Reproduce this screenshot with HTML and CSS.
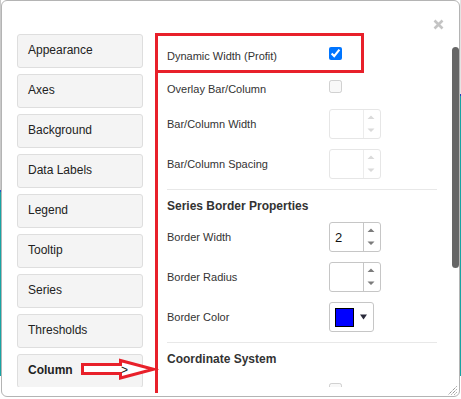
FILE: index.html
```html
<!DOCTYPE html>
<html>
<head>
<meta charset="utf-8">
<link rel="stylesheet" href="styles.css">
</head>
<body>
<div class="modal">
  <span class="close" aria-label="Close"><svg width="11" height="11" viewBox="0 0 11 11"><path d="M1.5 1.5 L9.5 9.5 M9.5 1.5 L1.5 9.5" stroke="#c4c4c4" stroke-width="2.6" stroke-linecap="butt"/></svg></span>
  <div class="body">
    <nav class="side">
      <div class="tab">Appearance</div>
      <div class="tab">Axes</div>
      <div class="tab">Background</div>
      <div class="tab">Data Labels</div>
      <div class="tab">Legend</div>
      <div class="tab">Tooltip</div>
      <div class="tab">Series</div>
      <div class="tab">Thresholds</div>
      <div class="tab active">Column <span class="caret">&gt;</span></div>
    </nav>
    <div class="panel">
      <div class="row check first"><label class="lbl">Dynamic Width (Profit)</label><input type="checkbox" checked></div>
      <div class="row check second"><label class="lbl">Overlay Bar/Column</label><input type="checkbox" disabled></div>
      <div class="row"><label class="lbl">Bar/Column Width</label>
        <div class="spin off"><input type="text" value="" disabled><span class="arrows"><svg width="16" height="28" viewBox="0 0 16 28"><path d="M3.5 9 L7 5.5 L10.5 9Z M3.5 18.5 L7 22 L10.5 18.5Z"/></svg></span></div>
      </div>
      <div class="row"><label class="lbl">Bar/Column Spacing</label>
        <div class="spin off"><input type="text" value="" disabled><span class="arrows"><svg width="16" height="28" viewBox="0 0 16 28"><path d="M3.5 9 L7 5.5 L10.5 9Z M3.5 18.5 L7 22 L10.5 18.5Z"/></svg></span></div>
      </div>
      <hr class="sep">
      <h3 class="heading">Series Border Properties</h3>
      <div class="row"><label class="lbl">Border Width</label>
        <div class="spin"><input type="text" value="2"><span class="arrows"><svg width="16" height="28" viewBox="0 0 16 28"><path d="M3.5 9 L7 5.5 L10.5 9Z M3.5 18.5 L7 22 L10.5 18.5Z"/></svg></span></div>
      </div>
      <div class="row"><label class="lbl">Border Radius</label>
        <div class="spin"><input type="text" value=""><span class="arrows"><svg width="16" height="28" viewBox="0 0 16 28"><path d="M3.5 9 L7 5.5 L10.5 9Z M3.5 18.5 L7 22 L10.5 18.5Z"/></svg></span></div>
      </div>
      <div class="row"><label class="lbl">Border Color</label>
        <div class="picker"><span class="swatch"></span><svg class="drop" width="7" height="6" viewBox="0 0 7 6"><path d="M0 0.5 H7 L3.5 5.5Z"/></svg></div>
      </div>
      <hr class="sep">
      <h3 class="heading">Coordinate System</h3>
      <div class="row check last"><label class="lbl">Enable Polar Mode</label><input type="checkbox" disabled></div>
    </div>
  </div>
  <div class="thumb"></div>
  <span class="grip"><svg width="9" height="9" viewBox="0 0 9 9"><path d="M8.5 0.5 L0.5 8.5 M8.5 3.5 L3.5 8.5 M8.5 6.5 L6.5 8.5" stroke="#666" stroke-width="1" stroke-dasharray="1 1"/></svg></span>
</div>
<svg class="annot" width="461" height="399" viewBox="0 0 461 399">
  <rect x="156.5" y="34.5" width="206" height="37" fill="none" stroke="#e8202a" stroke-width="3"/>
  <path d="M156.5 71 V393" fill="none" stroke="#e8202a" stroke-width="3"/>
  <polygon points="82.5,364.5 120.5,364.5 120.5,360.5 153.5,369.3 120.5,378 120.5,373.5 82.5,373.5" fill="#fff" stroke="#e8202a" stroke-width="3"/>
</svg>
</body>
</html>
```

FILE: styles.css
```css
html, body {
  margin: 0;
  padding: 0;
}

body {
  position: relative;
  width: 461px;
  height: 399px;
  overflow: hidden;
  font-family: "Liberation Sans", Arial, sans-serif;
  background:
    linear-gradient(to bottom, #c9c9c9 0 190px, #2456c4 190px 192px, #17a3a3 192px 376px, #ffffff 376px) left top / 1px 100% no-repeat,
    linear-gradient(to bottom, #e4e4e4 0 94px, #2040c0 94px 96px, #17a3a3 96px 376px, #ffffff 376px) right top / 1px 100% no-repeat,
    #ffffff;
}

.modal {
  position: relative;
  box-sizing: border-box;
  width: 459px;
  height: 397px;
  margin-left: 1px;
  border: 1px solid #b4b4b4;
  border-radius: 6px;
  background: #ffffff;
}

.close {
  position: absolute;
  top: 18px;
  right: 15px;
  width: 11px;
  height: 11px;
  display: block;
}

.close svg {
  display: block;
}

.body {
  display: flex;
  gap: 24px;
  margin-top: 33px;
  height: 353px;
  padding-left: 15px;
  overflow: hidden;
}

.side {
  flex: none;
  width: 126px;
  display: flex;
  flex-direction: column;
  gap: 6px;
}

.tab {
  flex: none;
  box-sizing: border-box;
  height: 34px;
  padding: 8px 14px 0 10px;
  border: 1px solid #dedede;
  border-radius: 3px;
  background: #f4f4f4;
  font-size: 12px;
  line-height: 14px;
  color: #222;
  display: flex;
  justify-content: space-between;
}

.tab.active {
  font-weight: bold;
}

.caret {
  position: relative;
  z-index: 5;
  font-weight: normal;
  color: #111;
}

.panel {
  flex: none;
  width: 270px;
  padding-top: 3px;
}

.row {
  display: flex;
  align-items: center;
  height: 40px;
  font-size: 11px;
  color: #333;
}

.lbl {
  flex: none;
  width: 162px;
  line-height: 13px;
}

.row.check {
  align-items: baseline;
  box-sizing: border-box;
  padding-top: 10px;
}

.row.first {
  height: 33px;
}

.row.second {
  height: 34px;
}

.row.last {
  height: 40px;
  padding-top: 13px;
}

.row input[type="checkbox"] {
  margin: 0;
  width: 13px;
  height: 13px;
}

.spin {
  display: flex;
  box-sizing: border-box;
  width: 52px;
  height: 30px;
  border: 1px solid #c6c6c6;
  border-radius: 3px;
  background: #fff;
}

.spin input {
  box-sizing: border-box;
  width: 34px;
  height: 100%;
  margin: 0;
  padding: 0 0 0 5px;
  border: 0;
  border-right: 1px solid #c6c6c6;
  background: transparent;
  font-family: "Liberation Sans", Arial, sans-serif;
  font-size: 13px;
  color: #111;
  outline: none;
}

.arrows {
  display: block;
  width: 16px;
  height: 28px;
}

.arrows svg {
  display: block;
  fill: #7c7c7c;
}

.spin.off {
  border-color: #e6e6e6;
}

.spin.off input {
  border-right-color: #ececec;
}

.spin.off .arrows svg {
  fill: #dadada;
}

.picker {
  display: flex;
  align-items: center;
  gap: 6px;
  box-sizing: border-box;
  width: 45px;
  height: 30px;
  padding-left: 5px;
  border: 1px solid #c6c6c6;
  border-radius: 3px;
}

.swatch {
  display: block;
  box-sizing: border-box;
  width: 19px;
  height: 19px;
  border: 1px solid #000;
  background: #0000ff;
}

.drop {
  display: block;
  fill: #2a2a3a;
}

.sep {
  margin: 5px 0 0;
  height: 0;
  border: 0;
  border-top: 1px solid #e8e8e8;
}

.heading {
  margin: 9px 0 4px;
  font-size: 12px;
  line-height: 14px;
  font-weight: bold;
  color: #333;
}

.thumb {
  position: absolute;
  top: 46px;
  right: 0;
  width: 7px;
  height: 221px;
  border-radius: 4px;
  background: #666;
}

.grip {
  position: absolute;
  right: 2px;
  bottom: 1px;
  width: 9px;
  height: 9px;
  display: block;
}

.grip svg {
  display: block;
}

.annot {
  position: absolute;
  left: 0;
  top: 0;
  z-index: 2;
  pointer-events: none;
}
```
